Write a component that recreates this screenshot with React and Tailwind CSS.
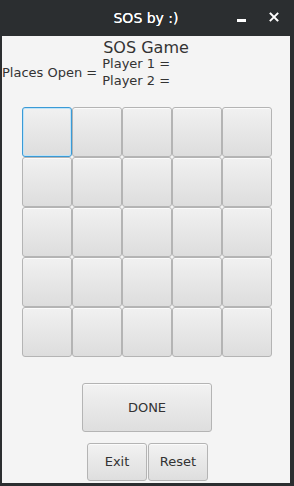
import React from 'react';

const font = { fontFamily: '"DejaVu Sans", sans-serif' };

const Cell = ({ focused }) => (
  <button
    className={`w-[50px] h-[50px] rounded-[3px] border bg-gradient-to-b from-[#f1f1f1] to-[#dddddd] ${
      focused
        ? 'border-[#3a9ad6] shadow-[inset_0_0_0_1px_#bfe3f7]'
        : 'border-[#b4b4b4] shadow-[inset_0_1px_0_#fbfbfb]'
    }`}
  />
);

const Btn = ({ children, className }) => (
  <button
    className={`rounded-[3px] border border-[#b4b4b4] bg-gradient-to-b from-[#f2f2f2] to-[#dedede] shadow-[inset_0_1px_0_#fbfbfb] text-[13px] text-[#333333] ${className}`}
  >
    {children}
  </button>
);

export default function App() {
  const cells = Array.from({ length: 25 }, (_, i) => i);

  return (
    <div className="w-[294px] h-[486px] bg-[#2b2e30] flex flex-col pl-[2px] pr-[4px] pb-[3px]" style={font}>
      <div className="h-[36px] flex items-center relative shrink-0">
        <div className="flex-1 text-center text-white text-[14px] [text-shadow:0_0_0.4px_#ffffff]">SOS by :)</div>
        <svg className="absolute left-[235px] top-[19px]" width="10" height="4" viewBox="0 0 10 4">
          <rect x="0" y="0" width="9" height="3" fill="#ffffff" />
        </svg>
        <svg className="absolute left-[267px] top-[12px]" width="10" height="10" viewBox="0 0 10 10">
          <path d="M1.5 1.5 L8.5 8.5 M8.5 1.5 L1.5 8.5" stroke="#ffffff" strokeWidth="1.9" strokeLinecap="square" />
        </svg>
      </div>

      <div className="flex-1 bg-[#f4f4f4] flex flex-col pt-[2px] text-[#333333]">
        <div className="text-center text-[16px] leading-[19px]">SOS Game</div>

        <div className="flex items-center mt-[-2px]">
          <div className="text-[13px] leading-[17px]">Places Open =</div>
          <div className="ml-[5px] flex flex-col text-[13px] leading-[17px]">
            <span>Player 1 =</span>
            <span>Player 2 =</span>
          </div>
        </div>

        <div className="mt-[18px] ml-[20px] grid grid-cols-5 w-[250px]">
          {cells.map((i) => (
            <Cell key={i} focused={i === 0} />
          ))}
        </div>

        <Btn className="mt-[26px] ml-[80px] w-[130px] h-[49px]">DONE</Btn>

        <div className="mt-[11px] ml-[85px] flex gap-[1px]">
          <Btn className="w-[60px] h-[38px]">Exit</Btn>
          <Btn className="w-[60px] h-[38px]">Reset</Btn>
        </div>
      </div>
    </div>
  );
}
